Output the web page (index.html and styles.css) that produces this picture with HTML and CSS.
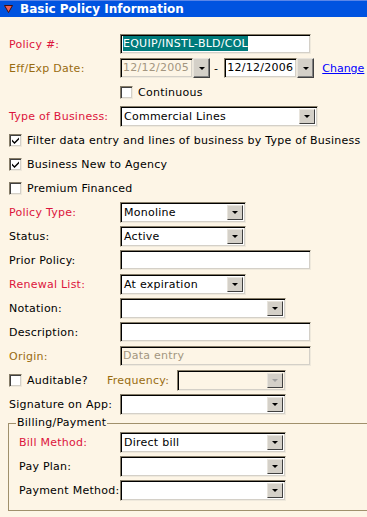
FILE: index.html
```html
<!DOCTYPE html>
<html>
<head>
<meta charset="utf-8">
<link rel="stylesheet" href="styles.css">
</head>
<body>
<div class="panel">
  <div class="header">
    <svg class="tri" width="9" height="8" viewBox="0 0 9 8"><polygon points="0.5,0.5 8.5,0.5 4.5,7.5" fill="#e8605a" stroke="#401010" stroke-width="1"/></svg>
    <span class="title">Basic Policy Information</span>
  </div>
  <div class="form">
    <div class="row">
      <span class="lbl req">Policy #:</span>
      <div class="field w190"><span class="hl">EQUIP/INSTL-BLD/COL</span></div>
    </div>
    <div class="row">
      <span class="lbl dim">Eff/Exp Date:</span>
      <div class="date">
        <div class="field dis dw">12/12/2005</div>
        <div class="dbtn"><span class="arrow"></span></div>
      </div>
      <span class="dash">-</span>
      <div class="date">
        <div class="field dw">12/12/2006</div>
        <div class="dbtn"><span class="arrow"></span></div>
      </div>
      <a class="link" href="#">Change</a>
    </div>
    <div class="row">
      <span class="lbl"></span>
      <span class="cb"></span><span class="cbtext">Continuous</span>
    </div>
    <div class="row">
      <span class="lbl req">Type of Business:</span>
      <div class="select w198"><span class="val">Commercial Lines</span><span class="btn"><span class="arrow"></span></span></div>
    </div>
    <div class="row cbrow">
      <span class="cb checked"><svg width="9" height="9" viewBox="0 0 9 9"><path d="M1 3.5 L3.5 6 L8 1.5 L8 3.5 L3.5 8 L1 5.5 Z" fill="#000"/></svg></span><span class="cbtext">Filter data entry and lines of business by Type of Business</span>
    </div>
    <div class="row cbrow">
      <span class="cb checked"><svg width="9" height="9" viewBox="0 0 9 9"><path d="M1 3.5 L3.5 6 L8 1.5 L8 3.5 L3.5 8 L1 5.5 Z" fill="#000"/></svg></span><span class="cbtext">Business New to Agency</span>
    </div>
    <div class="row cbrow">
      <span class="cb"></span><span class="cbtext">Premium Financed</span>
    </div>
    <div class="row">
      <span class="lbl req">Policy Type:</span>
      <div class="select w126"><span class="val">Monoline</span><span class="btn"><span class="arrow"></span></span></div>
    </div>
    <div class="row">
      <span class="lbl">Status:</span>
      <div class="select w126"><span class="val">Active</span><span class="btn"><span class="arrow"></span></span></div>
    </div>
    <div class="row">
      <span class="lbl">Prior Policy:</span>
      <div class="field w190"></div>
    </div>
    <div class="row">
      <span class="lbl req">Renewal List:</span>
      <div class="select w126"><span class="val">At expiration</span><span class="btn"><span class="arrow"></span></span></div>
    </div>
    <div class="row">
      <span class="lbl">Notation:</span>
      <div class="select w166"><span class="val"></span><span class="btn"><span class="arrow"></span></span></div>
    </div>
    <div class="row">
      <span class="lbl">Description:</span>
      <div class="field w190"></div>
    </div>
    <div class="row">
      <span class="lbl dim">Origin:</span>
      <div class="field dis w190">Data entry</div>
    </div>
    <div class="row cbrow">
      <span class="cb"></span><span class="cbtext aud">Auditable?</span>
      <span class="freq dim">Frequency:</span>
      <div class="select dis w109"><span class="val"></span><span class="btn"><span class="arrow"></span></span></div>
    </div>
    <div class="row">
      <span class="lbl">Signature on App:</span>
      <div class="select w166"><span class="val"></span><span class="btn"><span class="arrow"></span></span></div>
    </div>
    <fieldset class="billing">
      <legend>Billing/Payment</legend>
      <div class="row">
        <span class="lbl2 req">Bill Method:</span>
        <div class="select w166"><span class="val">Direct bill</span><span class="btn"><span class="arrow"></span></span></div>
      </div>
      <div class="row">
        <span class="lbl2">Pay Plan:</span>
        <div class="select w166"><span class="val"></span><span class="btn"><span class="arrow"></span></span></div>
      </div>
      <div class="row">
        <span class="lbl2">Payment Method:</span>
        <div class="select w166"><span class="val"></span><span class="btn"><span class="arrow"></span></span></div>
      </div>
    </fieldset>
  </div>
</div>
</body>
</html>
```
FILE: styles.css
```css
html, body {
  margin: 0;
  padding: 0;
  background: #fdf5e6;
  overflow: hidden;
}
body {
  font-family: "DejaVu Sans", Verdana, sans-serif;
  font-size: 11px;
  letter-spacing: 0.25px;
  color: #000;
}
.panel {
  width: 367px;
  height: 517px;
  overflow: hidden;
}
.header {
  height: 16px;
  background: #0053e0;
  border-top: 1px solid #5a86e8;
  display: flex;
  align-items: center;
  padding-left: 4px;
}
.tri {
  display: block;
  margin-right: 7px;
}
.title {
  color: #fff;
  font-weight: bold;
  font-size: 12px;
  letter-spacing: 0;
  line-height: 16px;
}
.form {
  padding: 15px 0 0 9px;
}
.row {
  height: 24px;
  display: flex;
  align-items: center;
}
.lbl {
  width: 111px;
  flex: none;
  white-space: nowrap;
}
.req { color: #dc143c; }
.dim { color: #996c10; }
.field {
  box-sizing: border-box;
  height: 20px;
  background: #fff;
  border: 1px solid;
  border-color: #857c68 #efe9dc #efe9dc #857c68;
  box-shadow: inset 1px 1px 0 #000, inset -1px -1px 0 #d4d0c8;
  line-height: 18px;
  padding: 0 2px;
  white-space: nowrap;
  overflow: hidden;
}
.field.dis {
  background: #fdf5e6;
  color: #a39580;
}
.w190 { width: 191px; }
.dw { width: 73px; }
.hl {
  background: #007b7b;
  color: #fff;
  padding: 1px 0;
}
.date {
  display: flex;
  flex: none;
}
.dbtn {
  box-sizing: border-box;
  width: 17px;
  height: 20px;
  background: #d4d0c8;
  border: 1px solid;
  border-color: #e8e4dc #404040 #404040 #e8e4dc;
  box-shadow: inset -1px -1px 0 #808080;
  display: flex;
  align-items: center;
  justify-content: center;
}
.arrow {
  width: 0;
  height: 0;
  border-left: 3px solid transparent;
  border-right: 3px solid transparent;
  border-top: 3px solid #000;
  margin-top: 1px;
}
.dash {
  margin: 0 6px 0 4px;
}
.link {
  color: #0000ff;
  text-decoration: underline;
  margin-left: 8px;
  letter-spacing: 0;
  white-space: nowrap;
}
.select {
  box-sizing: border-box;
  height: 21px;
  background: #fff;
  border: 1px solid;
  border-color: #857c68 #efe9dc #efe9dc #857c68;
  box-shadow: inset 1px 1px 0 #000, inset -1px -1px 0 #d4d0c8;
  display: flex;
  align-items: stretch;
  padding: 2px;
}
.select .val {
  flex: 1;
  line-height: 15px;
  padding-left: 1px;
  white-space: nowrap;
}
.select .btn {
  box-sizing: border-box;
  width: 16px;
  background: #d4d0c8;
  border: 1px solid;
  border-color: #e8e4dc #404040 #404040 #e8e4dc;
  display: flex;
  align-items: center;
  justify-content: center;
}
.select.dis { background: #fdf5e6; }
.select.dis .arrow { border-top-color: #a0a0a0; }
.w198 { width: 198px; }
.w126 { width: 126px; }
.w166 { width: 166px; }
.w109 { width: 109px; }
.cb {
  box-sizing: border-box;
  width: 13px;
  height: 13px;
  flex: none;
  background: #fff;
  border: 1px solid;
  border-color: #857c68 #efe9dc #efe9dc #857c68;
  box-shadow: inset 1px 1px 0 #404040, inset -1px -1px 0 #d4d0c8;
  display: flex;
  align-items: center;
  justify-content: center;
}
.cb svg { display: block; }
.cbtext {
  margin-left: 5px;
  white-space: nowrap;
}
.aud { width: 80px; }
.freq {
  width: 70px;
}
.billing {
  margin: 0 -20px 0 -1px;
  padding: 0 0 8px 10px;
  border: 1px solid #a0906c;
  border-right: none;
}
.billing legend {
  padding: 0 1px;
  margin-left: -3px;
  line-height: 14px;
}
.lbl2 {
  width: 101px;
  flex: none;
  white-space: nowrap;
}
```
